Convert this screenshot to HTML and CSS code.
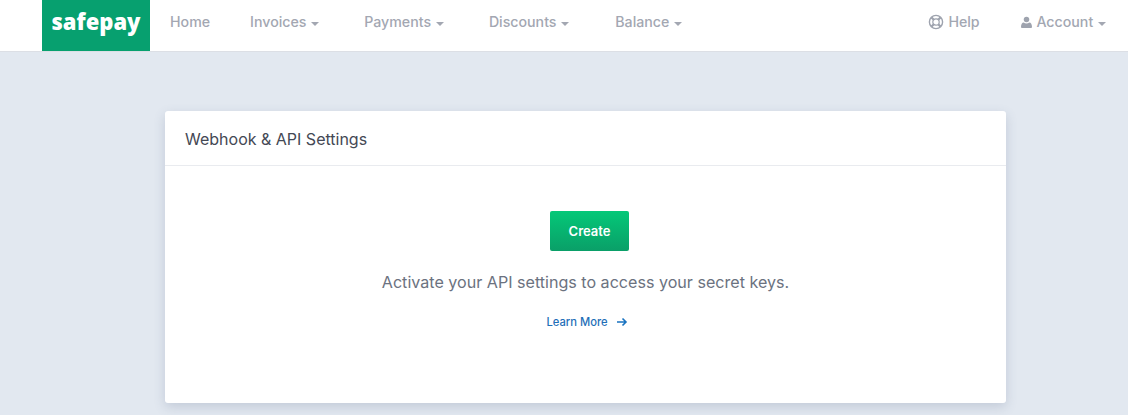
FILE: index.html
```html
<!DOCTYPE html>
<html lang="en">
<head>
    <meta charset="UTF-8">
    <meta name="viewport" content="width=device-width, initial-scale=1.0">
    <title>Webhook &amp; API Settings</title>
    <link rel="stylesheet" href="styles.css">
</head>
<body>
    <nav class="navbar">
        <a class="logo" href="#">safepay</a>
        <div class="nav-links">
            <a class="nav-link home" href="#">Home</a>
            <a class="nav-link invoices" href="#">Invoices <span class="caret"></span></a>
            <a class="nav-link payments" href="#">Payments <span class="caret"></span></a>
            <a class="nav-link discounts" href="#">Discounts <span class="caret"></span></a>
            <a class="nav-link balance" href="#">Balance <span class="caret"></span></a>
        </div>
        <div class="nav-right">
            <a class="nav-link help" href="#">
                <svg class="nav-icon" viewBox="0 0 16 16" width="16" height="16">
                    <circle cx="8" cy="8" r="6.6" fill="none" stroke="#9ea3ae" stroke-width="1.4"/>
                    <circle cx="8" cy="8" r="3.2" fill="none" stroke="#9ea3ae" stroke-width="1.2"/>
                    <path d="M3.400 3.400l2.400 2.400M12.600 3.400L10.200 5.800M3.400 12.600l2.400-2.400M12.600 12.600l-2.400-2.400" stroke="#9ea3ae" stroke-width="2.200"/>
                </svg>
                Help
            </a>
            <a class="nav-link account" href="#">
                <svg class="nav-icon" viewBox="0 0 12 14" width="11" height="13">
                    <circle cx="6" cy="3.6" r="3" fill="#9ea3ae"/>
                    <path d="M1 13c-.6 0-1-.4-1-1 0-3 1.200-5 3-5 .8.600 1.800 1 3 1s2.200-.4 3-1c1.800 0 3 2 3 5 0 .6-.4 1-1 1z" fill="#9ea3ae"/>
                </svg>
                Account <span class="caret"></span>
            </a>
        </div>
    </nav>

    <main class="content">
        <section class="card">
            <header class="card-header">Webhook &amp; API Settings</header>
            <div class="card-body">
                <button class="btn-create">Create</button>
                <p class="card-text">Activate your API settings to access your secret keys.</p>
                <a class="learn-more" href="#">
                    Learn More
                    <svg viewBox="0 0 12 12" width="12" height="12">
                        <path d="M1 6h9M6.500 2.500L10 6l-3.500 3.500" fill="none" stroke="#1a73c0" stroke-width="1.600"/>
                    </svg>
                </a>
            </div>
        </section>
    </main>
</body>
</html>
```

FILE: styles.css
```css
* {
    box-sizing: border-box;
}

html,
body {
    height: 100%;
}

body {
    margin: 0;
    background-color: #e2e8f0;
    font-family: Inter, "Noto Sans", sans-serif;
    overflow: hidden;
}

a {
    text-decoration: none;
}

.navbar {
    display: flex;
    align-items: flex-start;
    height: 52px;
    padding-left: 42px;
    background-color: #fff;
    border-bottom: 1px solid #dcdfe5;
}

.logo {
    display: block;
    width: 108px;
    height: 51px;
    padding-top: 7px;
    background-color: #07a06f;
    color: #fff;
    font-family: "Open Sans", sans-serif;
    font-size: 22px;
    font-weight: 800;
    line-height: 29px;
    text-align: center;
}

.nav-links {
    display: flex;
    margin-left: 20px;
    padding-top: 14px;
}

.nav-right {
    display: flex;
    margin-left: auto;
    margin-right: 22px;
    padding-top: 14px;
}

.nav-link {
    color: #a3a7b2;
    font-size: 14.200px;
    font-weight: 500;
    line-height: 16px;
    white-space: nowrap;
}

.home { margin-right: 40px; }
.invoices { margin-right: 45px; }
.payments { margin-right: 45px; }
.discounts { margin-right: 46px; }
.help { margin-right: 41px; }

.nav-icon {
    vertical-align: -3px;
    margin-right: 1px;
}

.account .nav-icon {
    vertical-align: -2px;
}

.caret {
    display: inline-block;
    width: 0;
    height: 0;
    margin-left: 1px;
    vertical-align: 1px;
    border-top: 4px solid #a3a7b2;
    border-left: 4px solid transparent;
    border-right: 4px solid transparent;
}

.content {
    padding: 59px 122px 0 165px;
}

.card {
    height: 292px;
    background-color: #fff;
    border-radius: 3px;
    box-shadow: 0 4px 12px rgba(70, 85, 120, 0.2);
}

.card-header {
    height: 55px;
    padding-left: 20px;
    border-bottom: 1px solid #e9ebef;
    color: #444854;
    font-size: 16px;
    font-weight: 400;
    line-height: 56px;
}

.card-body {
    display: flex;
    flex-direction: column;
    align-items: center;
    padding-top: 45px;
}

.btn-create {
    width: 79px;
    height: 40px;
    margin-left: 8px;
    padding: 0;
    border: none;
    border-radius: 2px;
    background: linear-gradient(#04c878, #0a9f68);
    color: #fff;
    font-family: inherit;
    font-size: 13px;
    font-weight: 600;
}

.card-text {
    margin: 21px 0 0;
    color: #6b7280;
    font-size: 16.100px;
    font-weight: 400;
    line-height: 20px;
}

.learn-more {
    margin-top: 21px;
    margin-left: 3px;
    color: #1f6fb8;
    font-size: 11.200px;
    font-weight: 500;
    line-height: 18px;
}

.learn-more svg {
    margin-left: 5px;
    vertical-align: -2px;
}
```
